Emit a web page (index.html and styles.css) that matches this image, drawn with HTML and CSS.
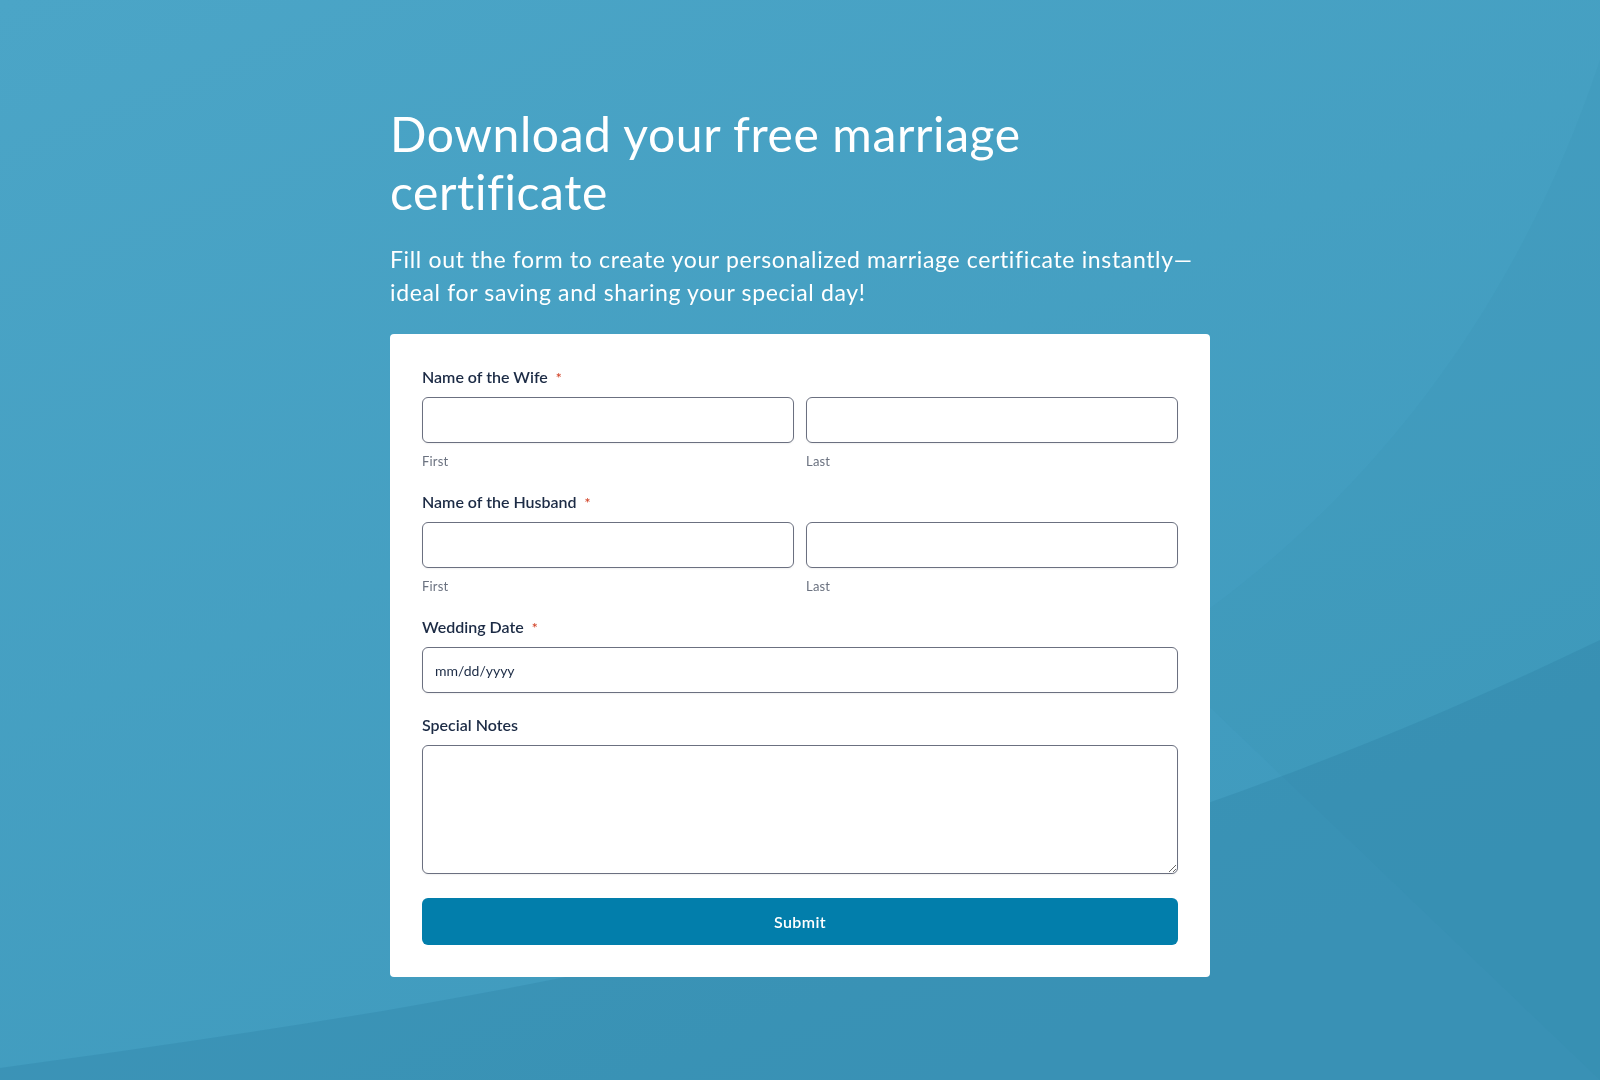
FILE: index.html
```html
<!DOCTYPE html>
<html>
<head>
    <title>Free Marriage Certificate</title>
    <meta name="viewport" content="width=device-width, initial-scale=1">
    <link rel="stylesheet" href="styles.css">
</head>
<body>
    <!-- soft waves behind the page -->
    <svg class="backdrop" viewBox="0 0 1600 1080" preserveAspectRatio="none" aria-hidden="true">
        <defs>
            <linearGradient id="sky" x1="0" y1="0" x2="0.6" y2="1">
                <stop offset="0" stop-color="#4ba5c7"/>
                <stop offset="1" stop-color="#3f9abd"/>
            </linearGradient>
        </defs>
        <rect width="1600" height="1080" fill="url(#sky)"/>
        <path d="M1600 60 C 1500 360 1320 540 1150 650 L 1600 1080 Z" fill="#2f86a8" opacity="0.10"/>
        <path d="M0 1068 C 420 1010 1000 930 1600 640 L 1600 1080 L 0 1080 Z" fill="#2a7fa3" opacity="0.30"/>
    </svg>

    <div class="page">
        <h1>Download your free marriage certificate</h1>
        <p class="lead">Fill out the form to create your personalized marriage certificate <span class="nobr">instantly—</span>ideal for saving and sharing your special day!</p>

        <form class="card" onsubmit="return false">
            <div class="field">
                <label class="field-label">Name of the Wife <span class="req">*</span></label>
                <div class="name-row">
                    <div class="name-part">
                        <input type="text" name="wife_first">
                        <span class="sub-label">First</span>
                    </div>
                    <div class="name-part">
                        <input type="text" name="wife_last">
                        <span class="sub-label">Last</span>
                    </div>
                </div>
            </div>

            <div class="field">
                <label class="field-label">Name of the Husband <span class="req">*</span></label>
                <div class="name-row">
                    <div class="name-part">
                        <input type="text" name="husband_first">
                        <span class="sub-label">First</span>
                    </div>
                    <div class="name-part">
                        <input type="text" name="husband_last">
                        <span class="sub-label">Last</span>
                    </div>
                </div>
            </div>

            <div class="field">
                <label class="field-label">Wedding Date <span class="req">*</span></label>
                <input type="text" name="wedding_date" class="date-input" placeholder="mm/dd/yyyy">
            </div>

            <div class="field">
                <label class="field-label">Special Notes</label>
                <textarea name="notes"></textarea>
            </div>

            <button type="submit">Submit</button>
        </form>
    </div>
</body>
</html>
```

FILE: styles.css
```css
html, body {
    margin: 0;
    padding: 0;
}
body {
    font-family: Lato, "Open Sans", Arial, sans-serif;
    min-height: 1080px;
    background: #45a0c3;
    color: #1c2b45;
    font-variant-ligatures: none;
}
.backdrop {
    position: fixed;
    top: 0;
    left: 0;
    width: 100%;
    height: 100%;
    z-index: 0;
}
.page {
    position: relative;
    z-index: 1;
    width: 820px;
    margin: 0 auto;
    padding-top: 105px;
}
h1 {
    margin: 0 0 23px;
    color: #fff;
    font-size: 48px;
    font-weight: 400;
    line-height: 57.5px;
    letter-spacing: 0.6px;
}
.lead {
    margin: 0 0 25px;
    color: #fff;
    font-size: 23px;
    font-weight: 400;
    line-height: 33px;
    letter-spacing: 0.65px;
}
.nobr {
    white-space: nowrap;
}
.card {
    background: #fff;
    border-radius: 4px;
    padding: 32px;
}
.field {
    margin-bottom: 21px;
}
.field-label {
    display: block;
    height: 21px;
    margin-bottom: 10px;
    font-size: 16px;
    font-weight: 600;
    line-height: 21px;
    color: #1c2b45;
}
.req {
    color: #d3462b;
    font-size: 14px;
    line-height: 1;
    margin-left: 4px;
}
.name-row {
    display: flex;
    gap: 12px;
}
.name-part {
    flex: 1;
}
.sub-label {
    display: block;
    margin-top: 9px;
    font-size: 13px;
    line-height: 18px;
    color: #6b7280;
    letter-spacing: 0.2px;
}
input, textarea {
    display: block;
    width: 100%;
    box-sizing: border-box;
    height: 46px;
    padding: 0 12px;
    border: 1px solid #6b7080;
    border-radius: 6px;
    background: #fff;
    box-shadow: 0 1px 2px rgba(0,0,0,0.06);
    font-family: Lato, Arial, sans-serif;
    font-size: 14px;
    color: #1c2b45;
}
.date-input::placeholder {
    color: #1c2b45;
    opacity: 1;
}
textarea {
    height: 129px;
    padding: 10px 12px;
    resize: vertical;
}
.field:last-of-type {
    margin-bottom: 24px;
}
button {
    display: block;
    width: 100%;
    height: 47px;
    border: none;
    border-radius: 6px;
    background: #027eab;
    color: #fff;
    font-family: Lato, Arial, sans-serif;
    font-size: 16px;
    font-weight: 600;
    letter-spacing: 0.4px;
    cursor: pointer;
}
button:hover {
    background: #016f97;
}
```
